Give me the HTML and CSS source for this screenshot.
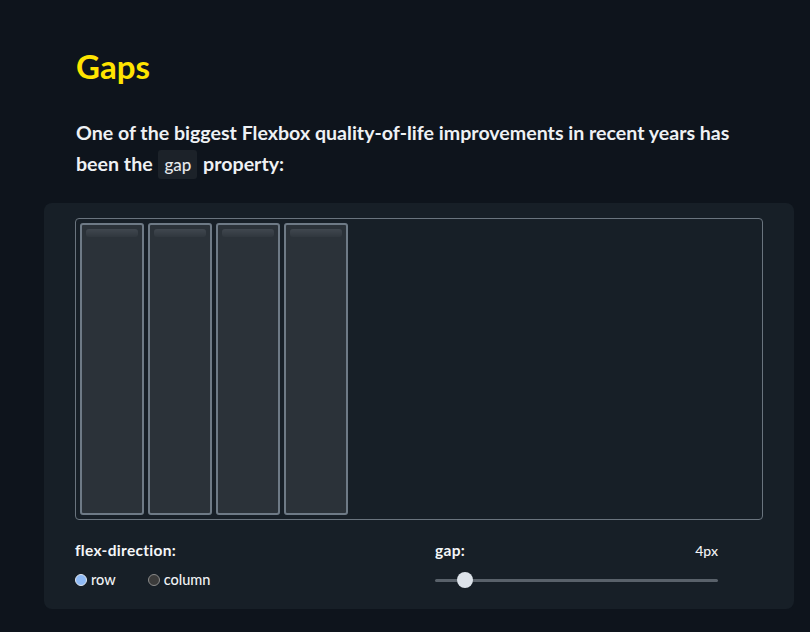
FILE: index.html
```html
<!DOCTYPE html>
<html lang="en">
<head>
<meta charset="utf-8">
<link rel="stylesheet" href="styles.css">
</head>
<body>
<main class="page">
  <h2 class="title">Gaps</h2>
  <p class="lead">One of the biggest Flexbox quality-of-life improvements in recent years has been the <code class="code">gap</code> property:</p>
  <section class="demo">
    <div class="stage">
      <div class="item"><span class="shine"></span></div>
      <div class="item"><span class="shine"></span></div>
      <div class="item"><span class="shine"></span></div>
      <div class="item"><span class="shine"></span></div>
    </div>
    <div class="controls">
      <div class="control">
        <div class="label">flex-direction:</div>
        <div class="radios">
          <label class="radio"><span class="dot dot-on"></span>row</label>
          <label class="radio"><span class="dot"></span>column</label>
        </div>
      </div>
      <div class="control">
        <div class="label-row"><span class="label">gap:</span><span class="value">4px</span></div>
        <div class="slider"><span class="track"></span><span class="thumb"></span></div>
      </div>
    </div>
  </section>
</main>
</body>
</html>
```
FILE: styles.css
```css
html, body { margin: 0; padding: 0; }
body {
  background: #0e141c;
  color: #f1f3f5;
  font-family: Lato, "Open Sans", sans-serif;
  width: 810px;
  height: 632px;
  overflow: hidden;
}
.page { padding: 46px 0 0 44px; }
.title {
  margin: 0 0 0 32px;
  color: #ffe400;
  font-size: 33px;
  font-weight: 700;
  line-height: 40px;
}
.lead {
  margin: 31px 0 0 32px;
  width: 690px;
  font-size: 19.6px;
  font-weight: 700;
  line-height: 31px;
  color: #eef1f4;
}
.code {
  display: inline-block;
  font-family: Lato, sans-serif;
  font-weight: 500;
  font-size: 17px;
  line-height: 19px;
  background: #1c2229;
  border-radius: 3px;
  padding: 5px 6px 5px;
  margin: 0 1px;
  color: #e6e9ec;
}
.demo {
  margin-top: 24px;
  width: 750px;
  box-sizing: border-box;
  background: #171f27;
  border-radius: 8px;
  padding: 15px 31px 20px 31px;
}
.stage {
  display: flex;
  gap: 4px;
  height: 302px;
  box-sizing: border-box;
  border: 1px solid #6a747e;
  border-radius: 4px;
  padding: 4px;
}
.item {
  width: 64px;
  box-sizing: border-box;
  border: 2px solid #6e7a86;
  border-radius: 3px;
  background: #2b3239;
  padding: 4px 4px 0;
}
.shine {
  display: block;
  height: 8px;
  border-radius: 3px;
  background: linear-gradient(#40474f, #30373e);
}
.controls {
  display: grid;
  grid-template-columns: 360px 283px;
  margin-top: 20px;
}
.label {
  font-size: 15.5px;
  font-weight: 700;
  letter-spacing: 0.3px;
  line-height: 20px;
  color: #f4f6f8;
}
.label-row { display: flex; justify-content: space-between; align-items: center; }
.value { font-size: 14px; font-weight: 500; color: #f0f2f4; }
.radios { display: flex; gap: 32px; margin-top: 11px; }
.radio {
  display: flex;
  align-items: center;
  gap: 4px;
  font-size: 14.5px;
  font-weight: 500;
  line-height: 18px;
  color: #f0f2f4;
}
.dot {
  width: 10px;
  height: 10px;
  border-radius: 50%;
  border: 1.5px solid #8a8a8a;
  background: #3b3b3b;
}
.dot-on {
  border-color: #dfe6ee;
  background: #8fbaf5;
}
.slider {
  position: relative;
  height: 18px;
  margin-top: 11px;
}
.track {
  position: absolute;
  left: 0; right: 0; top: 8px;
  height: 3px;
  border-radius: 2px;
  background: #59616a;
}
.thumb {
  position: absolute;
  left: 22px; top: 1px;
  width: 16px; height: 16px;
  border-radius: 50%;
  background: #dde3ea;
}
```
